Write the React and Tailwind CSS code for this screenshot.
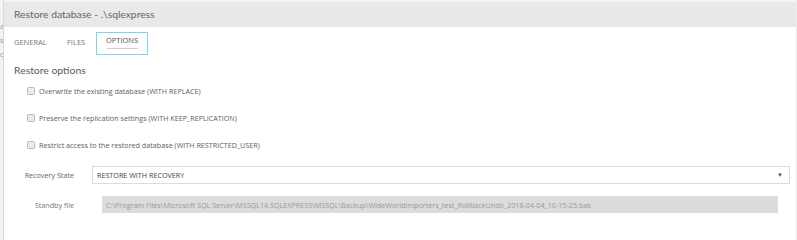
export default function App() {
  const options = [
    'Overwrite the existing database (WITH REPLACE)',
    'Preserve the replication settings (WITH KEEP_REPLICATION)',
    'Restrict access to the restored database (WITH RESTRICTED_USER)',
  ];

  return (
    <div className="w-[797px] h-[240px] flex bg-white overflow-hidden font-['Open_Sans',sans-serif] text-[#555]">
      {/* window behind */}
      <div className="w-[4px] bg-[#f3f3f3] border-r border-[#d9d9d9] flex flex-col text-[8px] text-[#999] leading-none pt-[22px] gap-[6px] overflow-hidden">
        <span>a</span>
        <span>s</span>
        <span>c</span>
      </div>

      <div className="flex-1 flex flex-col border-r border-[#ececec]">
        <div className="h-[2px] bg-[#f4f4f4]" />
        {/* Title bar */}
        <div className="h-[25px] bg-[#e9e9e9] flex items-center pl-[10px] font-['Lato',sans-serif] text-[10.3px] text-[#666]">
          Restore database - .\sqlexpress
        </div>

        {/* Tabs */}
        <div className="flex items-center h-[26px] mt-[3px] pl-[10px] text-[7.5px] text-[#777]">
          <div className="w-[53px]">GENERAL</div>
          <div className="w-[29px]">FILES</div>
          <div className="w-[52px] h-[23px] border border-[#7fd4ee] flex flex-col items-center justify-center text-[#555]">
            <span className="leading-none">OPTIONS</span>
            <span className="w-[31px] h-[1px] bg-[#cfcfcf] mt-[3px]" />
          </div>
        </div>

        <div className="pl-[10px] mt-[9px] font-['Lato',sans-serif] text-[10.4px] text-[#5a5a5a] leading-none">Restore options</div>

        <div className="flex flex-col pl-[23px] mt-[11px] gap-[17px]">
          {options.map((o) => (
            <div key={o} className="flex items-center gap-[4px] h-[10px] text-[7.2px] text-[#5e5e5e]">
              <span className="w-[8px] h-[8px] rounded-[1.5px] border border-[#b8b8b8] bg-[#ececec]" />
              <span>{o}</span>
            </div>
          ))}
        </div>

        <div className="flex items-center mt-[16px] h-[18px] text-[7.2px] text-[#666]">
          <div className="w-[88px] text-right pr-[18px]">Recovery State</div>
          <div className="w-[698px] h-[18px] border border-[#dcdcdc] flex items-center justify-between pl-[4px] pr-[6px] text-[#444]">
            <span>RESTORE WITH RECOVERY</span>
            <span className="text-[6px] text-[#555]">▼</span>
          </div>
        </div>

        <div className="flex items-center mt-[12px] h-[17px] text-[7.2px] text-[#777]">
          <div className="w-[98px] text-right pr-[28px]">Standby file</div>
          <div className="w-[676px] h-[17px] bg-[#dcdcdc] flex items-center pl-[4px] text-[#999]">
            C:\Program Files\Microsoft SQL Server\MSSQL14.SQLEXPRESS\MSSQL\Backup\WideWorldImporters_test_RollbackUndo_2018-04-04_10-15-25.bak
          </div>
        </div>
      </div>
    </div>
  );
}
